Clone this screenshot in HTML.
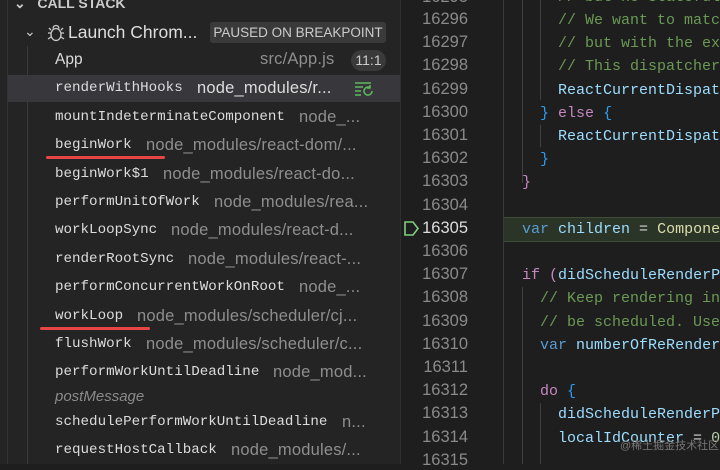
<!DOCTYPE html><html><head><meta charset="utf-8"><style>
body{margin:0;width:720px;height:464px;overflow:hidden;background:#1e1e1e;position:relative;font-family:"Liberation Sans",sans-serif}
.l{position:absolute;left:0;top:0;width:400px;height:464px;background:#242424;border-right:1px solid #2e2e2e}
.a{position:absolute;white-space:nowrap}
.n{font-family:"Liberation Mono",monospace;font-size:14.2px;color:#dcdcdc;left:55px}
.p{font-size:16.5px;color:#8e8e8e;letter-spacing:0.2px}
.ln{position:absolute;right:252px;font-size:16.5px;color:#8a8a8a;font-family:"Liberation Sans",sans-serif}
.c{position:absolute;left:522px;font-family:"Liberation Mono",monospace;font-size:15px;color:#d4d4d4;white-space:pre}
.cm{color:#6a9955}.v{color:#9cdcfe}.k{color:#569cd6}.pk{color:#c586c0}.b{color:#2e9bf0}.y{color:#dcdcaa}
.g{position:absolute;width:1px;background:#404040}
</style></head><body>
<div class="l">
<div class="a" style="left:7px;top:0;width:1px;height:464px;background:#333"></div>
<div class="a" style="left:27px;top:46px;width:1px;height:418px;background:#3a3a3a"></div>
<div class="a" style="left:14px;top:-5px;color:#ccc;font-size:14px;font-weight:bold">⌄&nbsp;&nbsp; CALL STACK</div>
<div class="a" style="left:24px;top:23px;color:#ccc;font-size:14px">⌄</div>
<svg class="a" style="left:46px;top:23px" width="20" height="20" viewBox="0 0 20 20" fill="none" stroke="#ccc" stroke-width="1.3"><ellipse cx="10" cy="11.5" rx="5" ry="6"/><path d="M7 5.5a3 3 0 0 1 6 0M5 10H2M18 10h-3M5 14l-3 2M15 14l3 2M5 7L3 5M15 7l2-2"/></svg>
<div class="a" style="left:68px;top:22px;color:#ddd;font-size:17.5px">Launch Chrom...</div>
<div class="a" style="left:210px;top:22px;width:176px;height:21px;background:#3a3a3a;border-radius:3px;color:#ccc;font-size:13.5px;line-height:21px;text-align:center">PAUSED ON BREAKPOINT</div>
<div class="a n" style="top:51px;font-family:'Liberation Sans',sans-serif;font-size:15.5px">App</div>
<div class="a p" style="left:260px;top:50px">src/App.js</div>
<div class="a" style="left:351px;top:50px;width:35px;height:21px;border-radius:11px;background:#3a3a3a;color:#ccc;font-size:14px;line-height:21px;text-align:center">11:1</div>
<div class="a" style="left:8px;top:75px;width:392px;height:27px;background:#37373c"></div>
<div class="a n" style="top:80px">renderWithHooks</div><div class="a p" style="left:197px;top:79px;color:#ddd">node_modules/r...</div>
<svg class="a" style="left:354px;top:81px" width="20" height="16" viewBox="0 0 20 16" fill="none" stroke="#5fb85f" stroke-width="1.5"><path d="M1 2h16M1 6h8M1 10h6M1 14h6M18 10a4 4 0 1 1-2-3.4M16 4v3h-3"/></svg>
<div class="a n" style="top:109px">mountIndeterminateComponent</div><div class="a p" style="left:299px;top:108px">node_...</div>
<div class="a n" style="top:137px">beginWork</div><div class="a p" style="left:146px;top:136px">node_modules/react-dom/...</div>
<div class="a" style="left:46px;top:156px;width:119px;height:3px;background:#e84545;border-radius:2px"></div>
<div class="a n" style="top:166px">beginWork$1</div><div class="a p" style="left:163px;top:165px">node_modules/react-do...</div>
<div class="a n" style="top:194px">performUnitOfWork</div><div class="a p" style="left:214px;top:193px">node_modules/rea...</div>
<div class="a n" style="top:222px">workLoopSync</div><div class="a p" style="left:171px;top:221px">node_modules/react-d...</div>
<div class="a n" style="top:251px">renderRootSync</div><div class="a p" style="left:188px;top:250px">node_modules/react-...</div>
<div class="a n" style="top:279px">performConcurrentWorkOnRoot</div><div class="a p" style="left:299px;top:278px">node_...</div>
<div class="a n" style="top:308px">workLoop</div><div class="a p" style="left:137px;top:307px">node_modules/scheduler/cj...</div>
<div class="a" style="left:40px;top:327px;width:110px;height:3px;background:#e84545;border-radius:2px"></div>
<div class="a n" style="top:336px">flushWork</div><div class="a p" style="left:146px;top:335px">node_modules/scheduler/c...</div>
<div class="a n" style="top:364px">performWorkUntilDeadline</div><div class="a p" style="left:273px;top:363px">node_mod...</div>
<div class="a" style="left:55px;top:388px;font-size:15px;font-style:italic;color:#8a8a8a">postMessage</div>
<div class="a n" style="top:414px">schedulePerformWorkUntilDeadline</div><div class="a p" style="left:342px;top:413px">n...</div>
<div class="a n" style="top:442px">requestHostCallback</div><div class="a p" style="left:231px;top:441px">node_modules/...</div>
</div>
<div class="a" style="left:503px;top:0;width:1px;height:464px;background:#3a3a3a"></div>
<div class="a" style="left:504px;top:217px;width:216px;height:23px;background:#2b3527;border-top:1px solid #3d4d37;border-bottom:1px solid #3d4d37"></div>
<svg class="a" style="left:403px;top:220px" width="17" height="17" viewBox="0 0 17 17" fill="none" stroke="#7fd07f" stroke-width="1.6"><path d="M2 2h8l5 6.5-5 6.5H2z"/></svg>
<div class="g" style="left:522px;top:0;height:183px"></div>
<div class="g" style="left:540px;top:0;height:100px"></div>
<div class="g" style="left:540px;top:125px;height:22px"></div>
<div class="g" style="left:522px;top:287px;height:177px"></div>
<div class="g" style="left:540px;top:403px;height:61px"></div>
<div class="ln" style="top:-12px">16295</div><div class="c" style="top:-11px">    <span class="cm">// but no stateful</span></div>
<div class="ln" style="top:10px">16296</div><div class="c" style="top:12px">    <span class="cm">// We want to match</span></div>
<div class="ln" style="top:33px">16297</div><div class="c" style="top:35px">    <span class="cm">// but with the ext</span></div>
<div class="ln" style="top:56px">16298</div><div class="c" style="top:58px">    <span class="cm">// This dispatcher</span></div>
<div class="ln" style="top:80px">16299</div><div class="c v" style="top:82px">    ReactCurrentDispat</div>
<div class="ln" style="top:103px">16300</div><div class="c" style="top:105px">  <span class="b">}</span> <span class="pk">else</span> <span class="b">{</span></div>
<div class="ln" style="top:126px">16301</div><div class="c v" style="top:128px">    ReactCurrentDispat</div>
<div class="ln" style="top:149px">16302</div><div class="c" style="top:151px">  <span class="b">}</span></div>
<div class="ln" style="top:172px">16303</div><div class="c" style="top:174px"><span class="pk">}</span></div>
<div class="ln" style="top:196px">16304</div>
<div class="ln" style="top:219px;color:#ddd">16305</div><div class="c" style="top:221px"><span class="k">var</span> <span class="v">children</span> = <span class="y">Compone</span></div>
<div class="ln" style="top:242px">16306</div>
<div class="ln" style="top:265px">16307</div><div class="c" style="top:267px"><span class="pk">if</span> <span class="pk">(</span><span class="v">didScheduleRenderP</span></div>
<div class="ln" style="top:288px">16308</div><div class="c" style="top:290px">  <span class="cm">// Keep rendering in</span></div>
<div class="ln" style="top:312px">16309</div><div class="c" style="top:314px">  <span class="cm">// be scheduled. Use</span></div>
<div class="ln" style="top:335px">16310</div><div class="c" style="top:337px">  <span class="k">var</span> <span class="v">numberOfReRender</span></div>
<div class="ln" style="top:358px">16311</div>
<div class="ln" style="top:381px">16312</div><div class="c" style="top:383px">  <span class="pk">do</span> <span class="b">{</span></div>
<div class="ln" style="top:404px">16313</div><div class="c v" style="top:406px">    didScheduleRenderP</div>
<div class="ln" style="top:428px">16314</div><div class="c" style="top:430px">    <span class="v">localIdCounter</span> = <span style="color:#b5cea8">0</span></div>
<div class="ln" style="top:451px">16315</div>
<div class="a" style="left:620px;top:437px;font-size:11px;color:#777;font-family:'Liberation Sans','Noto Sans CJK SC',sans-serif">@稀土掘金技术社区</div>
</body></html>
